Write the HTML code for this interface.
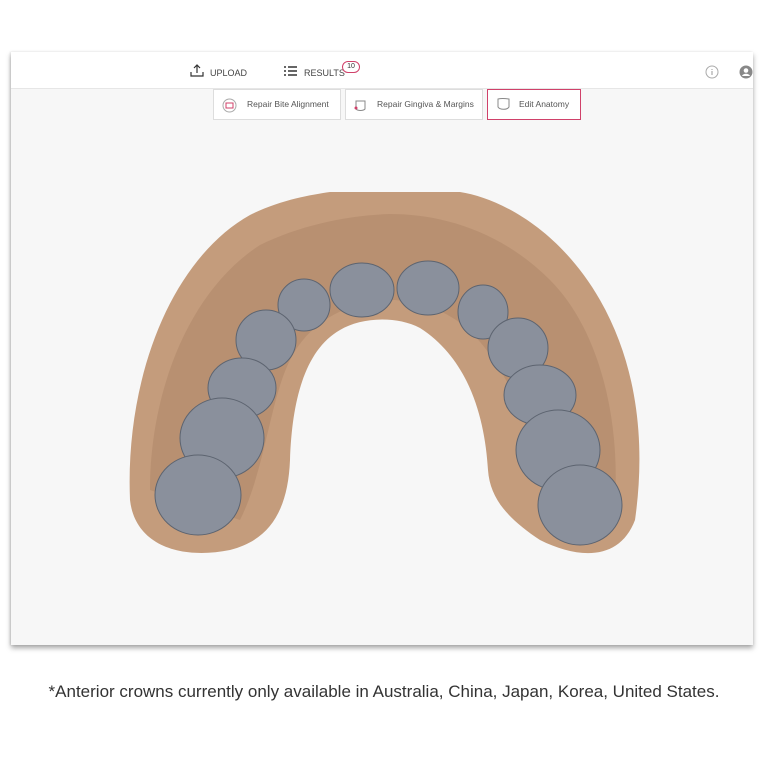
<!DOCTYPE html>
<html><head><style>
body{margin:0;width:768px;height:768px;background:#fff;font-family:"Liberation Sans",sans-serif;position:relative;overflow:hidden}
.panel{position:absolute;left:11px;top:52px;width:742px;height:593px;background:#f7f7f7;box-shadow:0 3px 5px rgba(0,0,0,.35),-1px 0 2px rgba(0,0,0,.1);}
.hdr{position:absolute;left:0;top:0;width:742px;height:36px;background:#fff;border-bottom:1px solid #e6e6e6}
.t{position:absolute;font-size:9px;color:#444}
.btn{position:absolute;top:37px;height:31px;background:#fff;border:1px solid #ddd;box-sizing:border-box;font-size:8.5px;color:#555;line-height:29px}
.note{position:absolute;top:682px;left:0;width:768px;text-align:center;font-size:17px;color:#333}
</style></head><body>
<div class="panel">
<div class="hdr">
<svg style="position:absolute;left:179px;top:12px" width="14" height="13" viewBox="0 0 14 13"><path d="M7 9V1M4 4l3-3 3 3M1 8v4h12V8" fill="none" stroke="#333" stroke-width="1.2"/></svg>
<div class="t" style="left:199px;top:16px">UPLOAD</div>
<svg style="position:absolute;left:273px;top:14px" width="14" height="11"><path d="M0 1h2M4 1h9M0 5h2M4 5h9M0 9h2M4 9h9" stroke="#333" stroke-width="1.5"/></svg>
<div class="t" style="left:293px;top:16px">RESULTS</div>
<div style="position:absolute;left:331px;top:9px;width:16px;height:10px;border:1px solid #d0416a;border-radius:6px;font-size:7px;line-height:10px;text-align:center;color:#333">10</div>
<svg style="position:absolute;left:694px;top:13px" width="14" height="14"><circle cx="7" cy="7" r="6" fill="none" stroke="#aaa"/><path d="M7 6v4M7 4v1" stroke="#aaa" stroke-width="1.2"/></svg>
<svg style="position:absolute;left:728px;top:13px" width="14" height="14"><circle cx="7" cy="7" r="6.5" fill="#888"/><circle cx="7" cy="5.5" r="2.3" fill="#fff"/><path d="M3 11c1-3 7-3 8 0" fill="#fff"/></svg>
</div>
<div class="btn" style="left:202px;width:128px"><svg style="position:absolute;left:8px;top:8px" width="15" height="15"><circle cx="7.5" cy="7.5" r="6.5" fill="none" stroke="#aaa"/><rect x="4" y="5" width="7" height="5" fill="none" stroke="#d0416a"/></svg><span style="position:absolute;left:33px">Repair Bite Alignment</span></div>
<div class="btn" style="left:334px;width:138px"><svg style="position:absolute;left:7px;top:8px" width="15" height="15"><path d="M3 3h9v8c-2 2-7 2-9 0z" fill="none" stroke="#888"/><circle cx="3" cy="10" r="1.5" fill="#d0416a"/></svg><span style="position:absolute;left:31px">Repair Gingiva &amp; Margins</span></div>
<div class="btn" style="left:476px;width:94px;border-color:#d0416a"><svg style="position:absolute;left:8px;top:7px" width="15" height="15"><path d="M2 2c0 0 4-1 11 0v8c-2 3-9 3-11 0z" fill="none" stroke="#888"/></svg><span style="position:absolute;left:31px">Edit Anatomy</span></div>
</div>
<svg style="position:absolute;left:0;top:0" width="768" height="768">
<path d="M130 500C125 380 170 260 250 215C280 200 310 195 330 192L460 192C500 198 560 230 600 300C640 370 645 450 635 520C620 560 580 560 540 540C510 520 490 500 488 470C485 420 470 360 420 328C395 315 360 318 340 330C305 350 292 400 290 460C288 510 270 540 230 550C180 560 135 545 130 500Z" fill="#c49c7c"/>
<path d="M150 490C150 390 190 290 260 245C300 225 350 215 390 214C440 214 500 230 550 280C600 330 620 420 615 500L560 520C540 470 520 400 500 370C470 320 440 305 395 300C350 300 310 320 290 360C270 400 265 470 240 520Z" fill="#a88062" opacity=".4"/>
<g fill="#8a909c" stroke="#5d6470" stroke-width="1">
<ellipse cx="362" cy="290" rx="32" ry="27"/><ellipse cx="428" cy="288" rx="31" ry="27"/>
<ellipse cx="304" cy="305" rx="26" ry="26"/><ellipse cx="483" cy="312" rx="25" ry="27"/>
<ellipse cx="266" cy="340" rx="30" ry="30"/><ellipse cx="518" cy="348" rx="30" ry="30"/>
<ellipse cx="242" cy="388" rx="34" ry="30"/><ellipse cx="540" cy="395" rx="36" ry="30"/>
<ellipse cx="222" cy="438" rx="42" ry="40"/><ellipse cx="558" cy="450" rx="42" ry="40"/>
<ellipse cx="198" cy="495" rx="43" ry="40"/><ellipse cx="580" cy="505" rx="42" ry="40"/>
</g>
</svg>
<div class="note">*Anterior crowns currently only available in Australia, China, Japan, Korea, United States.</div>
</body></html>
